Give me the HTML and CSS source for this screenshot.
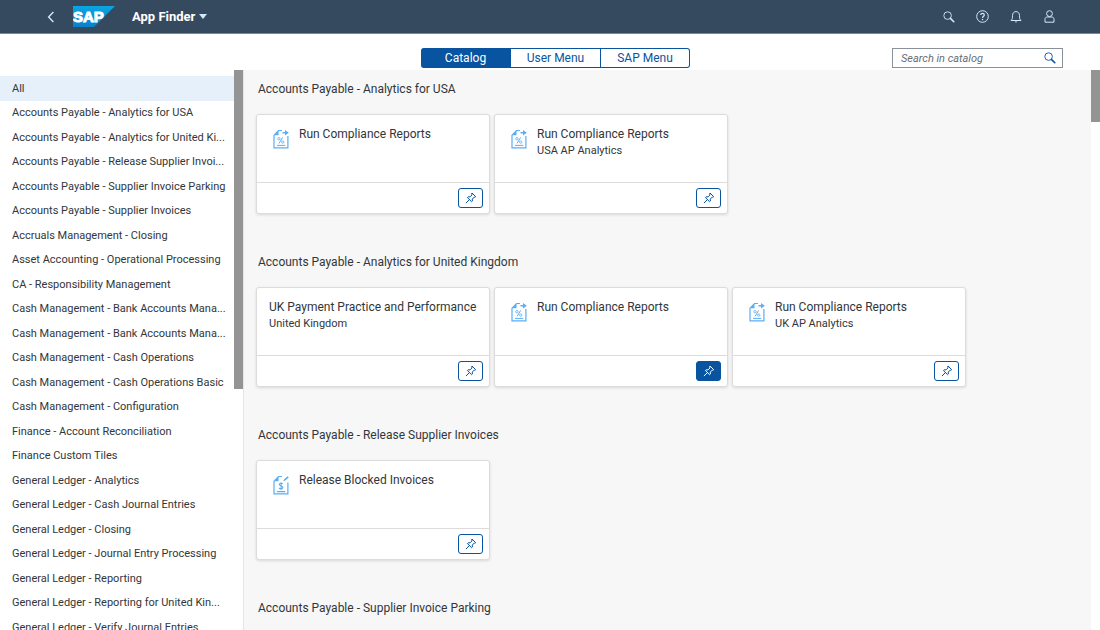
FILE: index.html
```html
<!DOCTYPE html>
<html lang="en">
<head>
<meta charset="utf-8">
<title>App Finder</title>
<link rel="stylesheet" href="styles.css">
</head>
<body>
<svg class="defs" aria-hidden="true">
  <symbol id="search" viewBox="0 0 12 12"><circle cx="4.6" cy="4.6" r="3.8" fill="none" stroke="currentColor" stroke-width=".9"/><path d="M7.4 7.4 10.8 10.7" stroke="currentColor" stroke-width="1.6" stroke-linecap="round"/></symbol>
  <symbol id="pin" viewBox="0 0 12 12"><path d="M7.3 1.3 10.7 4.7 9.9 5.3 9.2 5.1 7.3 7.1 7.4 9 6.6 9.7 2.4 5.5 3.1 4.8 5 4.9 7 2.9 6.7 2zM4.4 7.6 1.2 10.8" fill="none" stroke="currentColor" stroke-width="1" stroke-linejoin="round" stroke-linecap="round"/></symbol>
  <symbol id="report" viewBox="0 0 16 20"><path d="M9 1.5H5.5L1 6.2V18.9H14.9V7" fill="none" stroke="currentColor" stroke-width="1.2"/><path d="M5.5 1.5V6.2H1z" fill="currentColor"/><path d="M9.5 2.9H12V1L15.8 3.7 12 6.4V4.5H9.5z" fill="currentColor"/><circle cx="5.9" cy="9.7" r="1.2" fill="none" stroke="currentColor" stroke-width=".8"/><circle cx="9.7" cy="13.1" r="1.2" fill="none" stroke="currentColor" stroke-width=".8"/><path d="M9.7 8.4 6 14.4M4 16.4H12.3" stroke="currentColor" stroke-width="1"/></symbol>
  <symbol id="invoice" viewBox="0 0 16 20"><path d="M9 1.5H5.5L1 6.2V18.9H14.9V7.5" fill="none" stroke="currentColor" stroke-width="1.2"/><path d="M5.5 1.5V6.2H1z" fill="currentColor"/><path d="M10.2 6.3 11 4.4 14.5 1.2 15.8 2.4 12.2 5.6z" fill="currentColor"/><path d="M9.8 8.8C9 8 6.3 8 6.3 9.6 6.3 11.3 9.9 10.6 9.9 12.4 9.9 14 7.1 14 6 13M8.1 7.3V14.9M4 16.6H12.3" fill="none" stroke="currentColor" stroke-width="1.1"/></symbol>
</svg>

<header class="shell">
  <button class="shell-btn back" aria-label="Back"><svg width="8" height="12" viewBox="0 0 8 12"><path d="M6.4 1 1.6 6 6.4 11" fill="none" stroke="currentColor" stroke-width="1.4"/></svg></button>
  <svg class="logo" width="42" height="21" viewBox="0 0 42 21" role="img" aria-label="SAP">
    <defs><linearGradient id="sap" x1="0" y1="0" x2="0" y2="1"><stop offset="0" stop-color="#0aa5e2"/><stop offset="1" stop-color="#0a80cb"/></linearGradient></defs>
    <path d="M0 0H42L21 21H0z" fill="url(#sap)"/>
    <text class="logo-text" x="0" y="16">SAP</text>
  </svg>
  <button class="shell-btn title">App Finder<svg width="8" height="5" viewBox="0 0 8 5"><path d="M0 0H8L4 5z" fill="currentColor"/></svg></button>
  <div class="shell-actions">
    <button class="shell-btn" aria-label="Search"><svg width="12" height="12"><use href="#search"/></svg></button>
    <button class="shell-btn" aria-label="Help"><svg width="13" height="13" viewBox="0 0 13 13" fill="none" stroke="currentColor"><circle cx="6.5" cy="6.5" r="5.8" stroke-width="1"/><path d="M4.7 5C4.8 2.8 8.3 2.8 8.3 5 8.3 6.3 6.5 6.3 6.5 8" stroke-width="1.2"/><path d="M6.5 8.9V10.2" stroke-width="1.3"/></svg></button>
    <button class="shell-btn" aria-label="Notifications"><svg width="12" height="13" viewBox="0 0 12 13" fill="none" stroke="currentColor"><path d="M1 10.5C2.3 9.3 2.5 8.5 2.5 5.5 2.5 .3 9.5 .3 9.5 5.5 9.5 8.5 9.7 9.3 11 10.5z" stroke-linejoin="round"/><path d="M4.7 11.5H7.3L6 12.8z" fill="currentColor" stroke="none"/></svg></button>
    <button class="shell-btn" aria-label="User"><svg width="11" height="13" viewBox="0 0 11 13" fill="none" stroke="currentColor"><circle cx="5.5" cy="3.6" r="2.9"/><path d="M3.3 7H7.7C9.3 7 10 8 10 9.4V12.2H1V9.4C1 8 1.7 7 3.3 7z"/></svg></button>
  </div>
</header>

<div class="toolbar">
  <div class="segments">
    <button class="segment selected">Catalog</button>
    <button class="segment">User Menu</button>
    <button class="segment">SAP Menu</button>
  </div>
  <form class="search">
    <input type="text" placeholder="Search in catalog" aria-label="Search in catalog">
    <button type="button" aria-label="Search"><svg width="12" height="12"><use href="#search"/></svg></button>
  </form>
</div>

<div class="content">
  <nav class="sidebar" aria-label="Catalogs">
    <ul class="catalogs">
      <li><a class="current" href="#">All</a></li>
      <li><a href="#">Accounts Payable - Analytics for USA</a></li>
      <li><a href="#">Accounts Payable - Analytics for United Ki...</a></li>
      <li><a href="#">Accounts Payable - Release Supplier Invoi...</a></li>
      <li><a href="#">Accounts Payable - Supplier Invoice Parking</a></li>
      <li><a href="#">Accounts Payable - Supplier Invoices</a></li>
      <li><a href="#">Accruals Management - Closing</a></li>
      <li><a href="#">Asset Accounting - Operational Processing</a></li>
      <li><a href="#">CA - Responsibility Management</a></li>
      <li><a href="#">Cash Management - Bank Accounts Mana...</a></li>
      <li><a href="#">Cash Management - Bank Accounts Mana...</a></li>
      <li><a href="#">Cash Management - Cash Operations</a></li>
      <li><a href="#">Cash Management - Cash Operations Basic</a></li>
      <li><a href="#">Cash Management - Configuration</a></li>
      <li><a href="#">Finance - Account Reconciliation</a></li>
      <li><a href="#">Finance Custom Tiles</a></li>
      <li><a href="#">General Ledger - Analytics</a></li>
      <li><a href="#">General Ledger - Cash Journal Entries</a></li>
      <li><a href="#">General Ledger - Closing</a></li>
      <li><a href="#">General Ledger - Journal Entry Processing</a></li>
      <li><a href="#">General Ledger - Reporting</a></li>
      <li><a href="#">General Ledger - Reporting for United Kin...</a></li>
      <li><a href="#">General Ledger - Verify Journal Entries</a></li>
    </ul>
    <div class="track"><div class="thumb long"></div></div>
  </nav>

  <main class="groups">
    <section class="group">
      <h2>Accounts Payable - Analytics for USA</h2>
      <div class="cards">
        <article class="card">
          <div class="card-body"><svg class="card-icon"><use href="#report"/></svg><div><h3>Run Compliance Reports</h3></div></div>
          <div class="card-foot"><button class="pin" aria-label="Pin"><svg width="12" height="12"><use href="#pin"/></svg></button></div>
        </article>
        <article class="card">
          <div class="card-body"><svg class="card-icon"><use href="#report"/></svg><div><h3>Run Compliance Reports</h3><p>USA AP Analytics</p></div></div>
          <div class="card-foot"><button class="pin" aria-label="Pin"><svg width="12" height="12"><use href="#pin"/></svg></button></div>
        </article>
      </div>
    </section>
    <section class="group">
      <h2>Accounts Payable - Analytics for United Kingdom</h2>
      <div class="cards">
        <article class="card">
          <div class="card-body"><div><h3>UK Payment Practice and Performance</h3><p>United Kingdom</p></div></div>
          <div class="card-foot"><button class="pin" aria-label="Pin"><svg width="12" height="12"><use href="#pin"/></svg></button></div>
        </article>
        <article class="card">
          <div class="card-body"><svg class="card-icon"><use href="#report"/></svg><div><h3>Run Compliance Reports</h3></div></div>
          <div class="card-foot"><button class="pin pinned" aria-label="Unpin"><svg width="12" height="12"><use href="#pin"/></svg></button></div>
        </article>
        <article class="card">
          <div class="card-body"><svg class="card-icon"><use href="#report"/></svg><div><h3>Run Compliance Reports</h3><p>UK AP Analytics</p></div></div>
          <div class="card-foot"><button class="pin" aria-label="Pin"><svg width="12" height="12"><use href="#pin"/></svg></button></div>
        </article>
      </div>
    </section>
    <section class="group">
      <h2>Accounts Payable - Release Supplier Invoices</h2>
      <div class="cards">
        <article class="card">
          <div class="card-body"><svg class="card-icon"><use href="#invoice"/></svg><div><h3>Release Blocked Invoices</h3></div></div>
          <div class="card-foot"><button class="pin" aria-label="Pin"><svg width="12" height="12"><use href="#pin"/></svg></button></div>
        </article>
      </div>
    </section>
    <section class="group">
      <h2>Accounts Payable - Supplier Invoice Parking</h2>
    </section>
  </main>
  <div class="track"><div class="thumb short"></div></div>
</div>
</body>
</html>
```
FILE: styles.css
```css
* { box-sizing: border-box; }

body {
  margin: 0;
  height: 100vh;
  overflow: hidden;
  display: flex;
  flex-direction: column;
  background: #fff;
  color: #32363a;
  font-family: Roboto, "Liberation Sans", sans-serif;
  font-size: 11px;
}

button { font: inherit; cursor: pointer; padding: 0; }
h2, h3, p, ul { margin: 0; padding: 0; font-weight: normal; }
svg { display: block; }
.defs { display: none; }

.shell {
  flex: none;
  display: flex;
  align-items: center;
  height: 34px;
  padding: 0 45px;
  background: #354a5f;
  border-bottom: 1px solid #7a8794;
}
.shell-btn {
  display: flex;
  align-items: center;
  justify-content: center;
  min-width: 12px;
  height: 24px;
  border: 0;
  background: none;
  color: #d1e8ff;
}
.back { margin-right: 16px; }
.logo-text {
  fill: #fff;
  font-family: "Liberation Sans", Arial, sans-serif;
  font-size: 15px;
  font-weight: bold;
  stroke: #fff;
  stroke-width: 1px;
}
.title {
  margin-left: 17px;
  gap: 4px;
  color: #fff;
  font-size: 13px;
  font-weight: bold;
}
.title svg { color: #d1e8ff; }
.shell-actions { display: flex; gap: 21px; margin-left: auto; }

.toolbar {
  flex: none;
  display: grid;
  grid-template-columns: 1fr auto 1fr;
  align-items: center;
  height: 36px;
  padding: 12px 37px 0 48px;
}
.segments {
  grid-column: 2;
  display: grid;
  grid-template-columns: 90px 90px 89px;
}
.segment {
  height: 20px;
  border: 1px solid #0854a0;
  border-left-width: 0;
  background: #fff;
  color: #0854a0;
  font-family: Roboto, "Liberation Sans", sans-serif;
  font-size: 12px;
}
.segment:first-child { border-radius: 3px 0 0 3px; }
.segment:last-child { border-radius: 0 3px 3px 0; }
.segment.selected { background: #0854a0; color: #fff; }
.search {
  justify-self: end;
  display: flex;
  align-items: center;
  width: 171px;
  height: 20px;
  padding: 0 6px 0 8px;
  border: 1px solid #89919a;
  background: #fff;
}
.search input {
  flex: 1;
  min-width: 0;
  padding: 0;
  border: 0;
  outline: 0;
  background: none;
  font: italic 11px Roboto, "Liberation Sans", sans-serif;
}
.search input::placeholder { color: #6a6d70; opacity: 1; }
.search button { border: 0; background: none; color: #0854a0; }

.content { flex: 1; min-height: 0; display: flex; background: #f7f7f7; }
.sidebar {
  flex: none;
  display: flex;
  width: 244px;
  background: #fff;
  border-right: 1px solid #e5e5e5;
}
.catalogs { flex: 1; min-width: 0; padding-top: 6px; list-style: none; }
.catalogs a {
  display: block;
  padding-left: 12px;
  line-height: 24px;
  color: #32363a;
  text-decoration: none;
  white-space: nowrap;
}
.catalogs li:nth-child(odd) a { line-height: 25px; }
.catalogs .current { background: #e5f0fa; }
.track { flex: none; width: 9px; background: #fff; }
.thumb { background: #949494; }
.long { height: 57%; }
.short { height: 52px; }

.groups { flex: 1; min-width: 0; padding: 10px 12px 0; overflow: hidden; }
.group { margin-bottom: 39px; }
.group h2 {
  padding-left: 2px;
  margin-bottom: 16px;
  font-size: 12px;
  line-height: 18px;
}
.cards { display: flex; flex-wrap: wrap; gap: 4px; }
.card {
  width: 234px;
  background: #fff;
  border: 1px solid #dcdcdc;
  border-radius: 3px;
  box-shadow: 0 1px 3px rgba(0, 0, 0, .12);
}
.card-body { display: flex; gap: 10px; height: 67px; padding: 10px 12px 0; }
.card-body h3 { font-size: 12px; line-height: 18px; white-space: nowrap; }
.card-body p { font-size: 11px; line-height: 16px; }
.card-icon {
  width: 16px;
  height: 20px;
  margin: 4px 0 0 4px;
  color: #5badf5;
}
.card-foot {
  display: flex;
  justify-content: flex-end;
  align-items: center;
  height: 31px;
  padding: 0 6px;
  border-top: 1px solid #dcdcdc;
}
.pin {
  display: grid;
  place-items: center;
  width: 25px;
  height: 20px;
  border: 1px solid #0854a0;
  border-radius: 3px;
  background: #fff;
  color: #0854a0;
}
.pinned { background: #0854a0; color: #fff; }
```
